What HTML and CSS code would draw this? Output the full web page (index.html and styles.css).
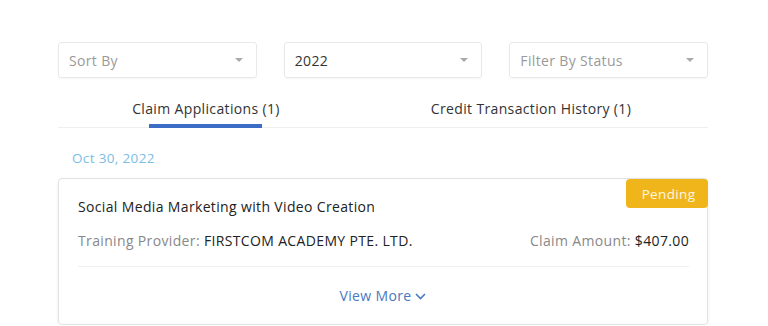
FILE: index.html
```html
<!DOCTYPE html>
<html>
<head>
<meta charset="utf-8">
<link rel="stylesheet" href="styles.css">
</head>
<body>
<div class="page">
  <div class="filters">
    <div class="select"><span class="placeholder">Sort By</span><span class="caret"></span></div>
    <div class="select"><span class="value">2022</span><span class="caret"></span></div>
    <div class="select"><span class="placeholder">Filter By Status</span><span class="caret"></span></div>
  </div>
  <div class="tabs">
    <div class="tab tab-first active">Claim Applications (1)</div>
    <div class="tab tab-second">Credit Transaction History (1)</div>
  </div>
  <div class="date">Oct 30, 2022</div>
  <div class="card">
    <div class="badge">Pending</div>
    <div class="card-body">
      <div class="title">Social Media Marketing with Video Creation</div>
      <div class="meta">
        <div><span class="label">Training Provider:</span> <span class="val">FIRSTCOM ACADEMY PTE. LTD.</span></div>
        <div><span class="label">Claim Amount:</span> <span class="val">$407.00</span></div>
      </div>
    </div>
    <div class="card-foot">
      <span class="more">View More <svg class="chev" width="11" height="7" viewBox="0 0 11 7"><path d="M1 1l4.5 4.5L10 1" fill="none" stroke="#4a79c0" stroke-width="1.6"/></svg></span>
    </div>
  </div>
</div>
</body>
</html>
```
FILE: styles.css
```css
* { box-sizing: border-box; }
html, body { margin: 0; padding: 0; background: #fff; }
body { font-family: "Open Sans", "Liberation Sans", sans-serif; color: #333; letter-spacing: 0.35px; }
.page { width: 650px; margin-left: 58px; padding-top: 42px; }
.filters { display: flex; gap: 27px; }
.select {
  flex: 1; height: 36px; border: 1px solid #e9e9e9; border-radius: 3px;
  box-shadow: 0 1px 2px rgba(0,0,0,0.04);
  display: flex; align-items: center; justify-content: space-between;
  padding: 0 13px 0 10px; font-size: 14px;
}
.placeholder { color: #9a9a9a; }
.value { color: #333; font-weight: 500; }
.caret { width: 0; height: 0; border-left: 4px solid transparent; border-right: 4px solid transparent; border-top: 4px solid #aaa; }
.tabs { display: flex; margin-top: 14px; height: 36px; border-bottom: 1px solid #eee; }
.tab { position: relative; text-align: center; font-size: 14px; line-height: 18px; padding-top: 8px; color: #333; }
.tab-first { width: 296px; }
.tab-second { flex: 1; }
.tab.active::after { content: ""; position: absolute; left: 50%; margin-left: -57px; width: 113px; bottom: -1px; height: 4px; background: #3b6cc6; }
.date { margin-top: 22px; margin-left: 14px; font-size: 13.5px; line-height: 16px; color: #7cbde3; }
.card { position: relative; margin-top: 12px; border: 1px solid #e2e2e2; border-radius: 4px; box-shadow: 0 1px 4px rgba(0,0,0,0.06); }
.badge { position: absolute; top: 0; right: -1px; width: 82px; height: 29px; background: #f0b51a; color: #fdf6e3; border-radius: 4px; font-size: 13.5px; font-weight: 500; display: flex; align-items: center; justify-content: center; padding-left: 3px; }
.card-body { margin: 0 18px 0 19px; padding: 19px 0 16px; border-bottom: 1px solid #f0f0f0; }
.title { font-size: 14px; line-height: 18px; color: #222; }
.meta { display: flex; justify-content: space-between; margin-top: 16px; font-size: 14px; line-height: 18px; }
.label { color: #888; }
.val { color: #222; }
.card-foot { height: 57px; display: flex; align-items: center; justify-content: center; }
.more { color: #4a79c0; font-size: 14px; font-weight: 500; display: inline-flex; align-items: center; gap: 4px; padding-left: 0; }
.chev { display: block; margin-top: 2px; }
```
